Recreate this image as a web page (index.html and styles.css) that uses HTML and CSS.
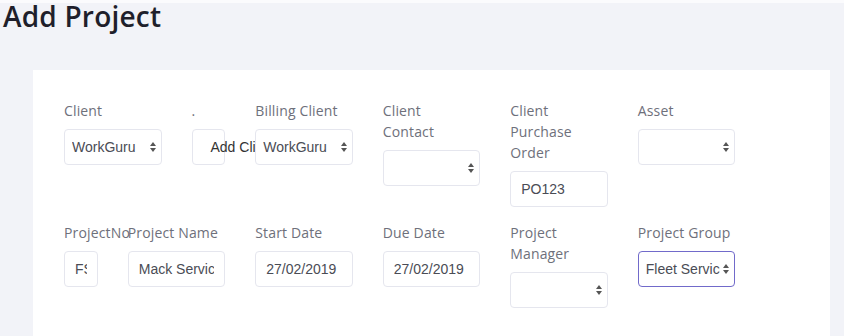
FILE: index.html
```html
<!DOCTYPE html>
<html lang="en">
<head>
<meta charset="utf-8">
<title>Add Project</title>
<link rel="stylesheet" href="styles.css">
</head>
<body>
<h1 class="page-title">Add Project</h1>
<div class="card">
  <div class="form-row">
    <div class="fg span2">
      <label class="lbl">Client</label>
      <select class="ctl sel"><option>WorkGuru</option></select>
    </div>
    <div class="fg span1">
      <label class="lbl">.</label>
      <button class="ctl btn-add" type="button">Add Client</button>
    </div>
    <div class="fg span2">
      <label class="lbl">Billing Client</label>
      <select class="ctl sel"><option>WorkGuru</option></select>
    </div>
    <div class="fg span2">
      <label class="lbl">Client<br>Contact</label>
      <select class="ctl sel"><option></option></select>
    </div>
    <div class="fg span2">
      <label class="lbl">Client<br>Purchase<br>Order</label>
      <input class="ctl" type="text" value="PO123">
    </div>
    <div class="fg span2">
      <label class="lbl">Asset</label>
      <select class="ctl sel"><option></option></select>
    </div>
  </div>
  <div class="form-row">
    <div class="fg span1">
      <label class="lbl">ProjectNo</label>
      <input class="ctl" type="text" value="FS-0012">
    </div>
    <div class="fg span2">
      <label class="lbl">Project Name</label>
      <input class="ctl" type="text" value="Mack Services">
    </div>
    <div class="fg span2">
      <label class="lbl">Start Date</label>
      <input class="ctl" type="text" value="27/02/2019">
    </div>
    <div class="fg span2">
      <label class="lbl">Due Date</label>
      <input class="ctl" type="text" value="27/02/2019">
    </div>
    <div class="fg span2">
      <label class="lbl">Project<br>Manager</label>
      <select class="ctl sel"><option></option></select>
    </div>
    <div class="fg span2">
      <label class="lbl">Project Group</label>
      <select class="ctl sel focus"><option>Fleet Services</option></select>
    </div>
  </div>
</div>
</body>
</html>
```
FILE: styles.css
```css
html, body {
  margin: 0;
  padding: 0;
}
body {
  width: 844px;
  height: 336px;
  overflow: hidden;
  background: linear-gradient(#fbfbfd 0, #fbfbfd 3px, #f2f3f8 3px) no-repeat, #f2f3f8;
  font-family: "Open Sans", "Liberation Sans", sans-serif;
}
.page-title {
  margin: 0;
  padding: 0 0 0 3px;
  font-family: "Open Sans", "Liberation Sans", sans-serif;
  font-size: 28px;
  line-height: 33px;
  font-weight: 600;
  letter-spacing: 0.2px;
  color: #1f1f2b;
}
.card {
  margin: 37px 14px 0 33px;
  background: #fff;
  padding: 30px 16px 60px;
}
.form-row {
  display: grid;
  grid-template-columns: repeat(12, 1fr);
  margin-bottom: 15px;
  align-items: start;
}
.fg {
  padding: 0 15px;
  min-width: 0;
}
.span1 { grid-column: span 1; }
.span2 { grid-column: span 2; }
.lbl {
  display: block;
  font-size: 14px;
  line-height: 21px;
  letter-spacing: 0.15px;
  color: #6e707b;
  margin-bottom: 8px;
  white-space: nowrap;
}
.ctl {
  display: block;
  box-sizing: border-box;
  width: 100%;
  height: 36px;
  margin: 0;
  padding: 0 10px;
  border: 1px solid #e5e6ee;
  border-radius: 4px;
  background-color: #fff;
  font-family: "Liberation Sans", Arial, sans-serif;
  font-size: 14px;
  color: #4a4c55;
  outline: none;
}
.sel {
  -webkit-appearance: none;
  appearance: none;
  padding: 0 14px 0 7px;
  background-image: url("data:image/svg+xml;utf8,<svg xmlns='http://www.w3.org/2000/svg' width='6' height='10' viewBox='0 0 6 10'><path d='M0 4 L3 0 L6 4 Z M0 6 L3 10 L6 6 Z' fill='%23555'/></svg>");
  background-repeat: no-repeat;
  background-position: right 5px center;
  background-size: 6px 10px;
}
.sel.focus {
  border-color: #716aca;
}
.btn-add {
  text-align: left;
  padding: 0 0 0 18px;
  white-space: nowrap;
  overflow: visible;
  color: #333;
  cursor: pointer;
}
```
